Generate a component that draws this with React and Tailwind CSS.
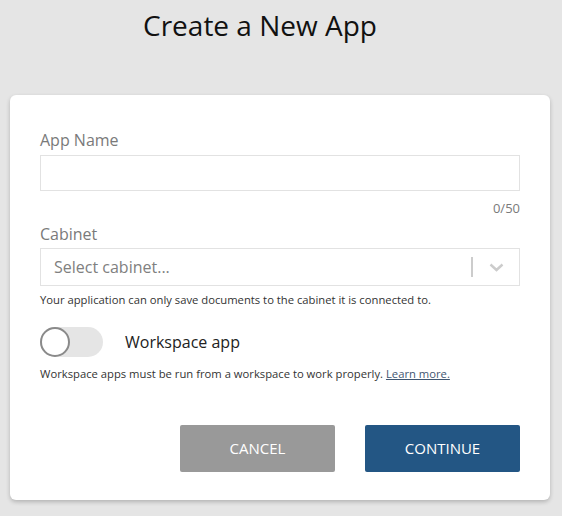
import React, { useState } from "react";

const App = () => {
    const [name, setName] = useState("");
    const [workspace, setWorkspace] = useState(false);

    return (
        <div
            className="min-h-screen w-full bg-[#e5e5e5] pt-[6px]"
            style={{ fontFamily: '"Open Sans", "Liberation Sans", sans-serif' }}
        >
            <h1 className="pr-[42px] text-center text-[28px] leading-[38px] text-[#111]">Create a New App</h1>

            <div className="ml-[10px] mt-[51px] w-[540px] rounded-[6px] bg-white px-[30px] pt-[34px] pb-[28px] shadow-[0_2px_4px_rgba(0,0,0,0.22)]">
                <label className="block text-[16px] leading-[22px] text-[#7a7a7a]">App Name</label>
                <input
                    value={name}
                    onChange={(e) => setName(e.target.value.slice(0, 50))}
                    className="mt-[4px] block h-[36px] w-full border border-[#e2e2e2] px-3 text-[16px] outline-none"
                />
                <div className="mt-[8px] text-right text-[13px] leading-[18px] text-[#7a7a7a]">
                    {name.length}/50
                </div>

                <label className="mt-[6px] block text-[16px] leading-[22px] text-[#7a7a7a]">Cabinet</label>
                <div className="mt-[3px] flex h-[38px] items-center border border-[#e2e2e2] pl-[13px]">
                    <span className="flex-1 text-[16px] text-[#808080]">Select cabinet...</span>
                    <span className="h-[20px] w-[2px] bg-[#cccccc]" />
                    <span className="flex w-[46px] justify-center">
                        <svg width="15" height="9" viewBox="0 0 15 9" fill="none">
                            <path d="M1.5 1.5 L7.5 7 L13.5 1.5" stroke="#cccccc" strokeWidth="2.4" />
                        </svg>
                    </span>
                </div>
                <p className="mt-[6px] text-[11.25px] leading-[15px] text-[#333]">
                    Your application can only save documents to the cabinet it is connected to.
                </p>

                <div className="mt-[20px] flex items-center">
                    <button
                        type="button"
                        onClick={() => setWorkspace(!workspace)}
                        className={`relative h-[30px] w-[63px] rounded-full ${workspace ? "bg-[#9bb5cf]" : "bg-[#e5e5e5]"}`}
                    >
                        <span
                            className={`absolute top-0 h-[30px] w-[30px] rounded-full border-2 border-[#8a8a8a] bg-white ${workspace ? "left-[33px]" : "left-0"}`}
                        />
                    </button>
                    <span className="ml-[22px] text-[16px] text-[#222]">Workspace app</span>
                </div>
                <p className="mt-[9px] text-[11.25px] leading-[15px] text-[#333]">
                    Workspace apps must be run from a workspace to work properly.{" "}
                    <a href="#" className="text-[#3f5671] underline">Learn more.</a>
                </p>

                <div className="mt-[44px] flex justify-end gap-[30px]">
                    <button className="h-[47px] w-[155px] rounded-[2px] bg-[#999999] text-[15px] text-white">
                        CANCEL
                    </button>
                    <button className="h-[47px] w-[155px] rounded-[2px] bg-[#235684] text-[15px] text-white">
                        CONTINUE
                    </button>
                </div>
            </div>
        </div>
    );
};

export default App;
